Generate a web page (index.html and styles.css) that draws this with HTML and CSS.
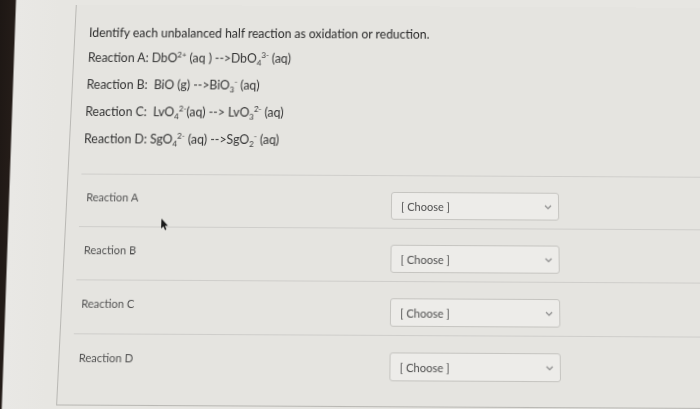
FILE: index.html
```html
<!DOCTYPE html>
<html>
<head>
<meta charset="utf-8">
<link rel="stylesheet" href="styles.css">
</head>
<body>
<div class="scene">
  <div class="sheet">
    <div class="card">
      <div class="question">
        <p class="title">Identify each unbalanced half reaction as oxidation or reduction.</p>
        <p class="eq">Reaction A: DbO<sup>2+</sup> (aq ) --&gt;DbO<sub>4</sub><sup>3-</sup> (aq)</p>
        <p class="eq">Reaction B:&nbsp; BiO (g) --&gt;BiO<sub>3</sub><sup>-</sup> (aq)</p>
        <p class="eq">Reaction C:&nbsp; LvO<sub>4</sub><sup>2-</sup>(aq) --&gt; LvO<sub>3</sub><sup>2-</sup> (aq)</p>
        <p class="eq">Reaction D: SgO<sub>4</sub><sup>2-</sup> (aq) --&gt;SgO<sub>2</sub><sup>-</sup> (aq)</p>
      </div>
      <div class="rows">
        <div class="row">
          <span class="label">Reaction A</span>
          <div class="select"><span>[ Choose ]</span><svg class="chev" width="8" height="5" viewBox="0 0 8 5"><path d="M1 1 L4 4 L7 1" fill="none" stroke="#8a8a8a" stroke-width="1.2"/></svg></div>
          <svg class="cursor" width="8" height="12" viewBox="0 0 8 12"><path d="M1 0 L1 10 L3.3 7.8 L5 11.5 L6.4 10.9 L4.8 7.3 L7.8 7.3 Z" fill="#1a1a1a"/></svg>
        </div>
        <div class="row">
          <span class="label">Reaction B</span>
          <div class="select"><span>[ Choose ]</span><svg class="chev" width="8" height="5" viewBox="0 0 8 5"><path d="M1 1 L4 4 L7 1" fill="none" stroke="#8a8a8a" stroke-width="1.2"/></svg></div>
        </div>
        <div class="row">
          <span class="label">Reaction C</span>
          <div class="select"><span>[ Choose ]</span><svg class="chev" width="8" height="5" viewBox="0 0 8 5"><path d="M1 1 L4 4 L7 1" fill="none" stroke="#8a8a8a" stroke-width="1.2"/></svg></div>
        </div>
        <div class="row last">
          <span class="label">Reaction D</span>
          <div class="select"><span>[ Choose ]</span><svg class="chev" width="8" height="5" viewBox="0 0 8 5"><path d="M1 1 L4 4 L7 1" fill="none" stroke="#8a8a8a" stroke-width="1.2"/></svg></div>
        </div>
      </div>
    </div>
  </div>
</div>
</body>
</html>
```

FILE: styles.css
```css
html, body {
  margin: 0;
  padding: 0;
  width: 700px;
  height: 409px;
  overflow: hidden;
}
body {
  background: linear-gradient(92deg, #1d1714 0, #241c18 15px, #e9e8e5 17px, #e7e6e2 60px);
  font-family: Lato, "Open Sans", sans-serif;
}
.scene {
  width: 700px;
  height: 409px;
  perspective: 1000px;
  perspective-origin: 424px 204px;
}
.sheet {
  width: 700px;
  height: 409px;
  transform-origin: 424px 204px;
  transform: rotateX(7deg) rotate(0.3deg);
  padding-left: 66px;
  box-sizing: border-box;
}
.card {
  width: 660px;
  height: 404px;
  border-left: 1px solid #b9b8b4;
  border-bottom: 1px solid #b9b8b4;
  background: #e5e4e0;
  box-sizing: border-box;
}
.question {
  padding: 22px 0 0 14px;
  color: #2a2a2a;
}
.question p {
  margin: 0;
}
.title {
  font-size: 12.4px;
  line-height: 16px;
  margin-bottom: 4px !important;
}
.eq {
  font-size: 12.4px;
  line-height: 28px;
  color: #333;
}
.eq sup, .eq sub {
  font-size: 8px;
  line-height: 0;
}
.rows {
  margin: 21px 0 0 13px;
  border-top: 1px solid #cfcecb;
}
.row {
  position: relative;
  display: grid;
  grid-template-columns: 311px 168px;
  align-items: start;
  height: 52px;
  border-bottom: 1px solid #cfcecb;
}
.row.last {
  height: 66px;
  border-bottom: none;
}
.label {
  padding: 16px 0 0 6px;
  font-size: 11px;
  line-height: 14px;
  color: #545454;
}
.select {
  margin-top: 16px;
  height: 28px;
  box-sizing: border-box;
  border: 1px solid #c6c5c1;
  border-radius: 3px;
  background: #edece9;
  display: flex;
  align-items: center;
  justify-content: space-between;
  padding: 0 6px 0 9px;
  font-size: 11px;
  color: #4e4e4e;
}
.chev {
  display: block;
}
.cursor {
  position: absolute;
  left: 81px;
  top: 44px;
}
```
